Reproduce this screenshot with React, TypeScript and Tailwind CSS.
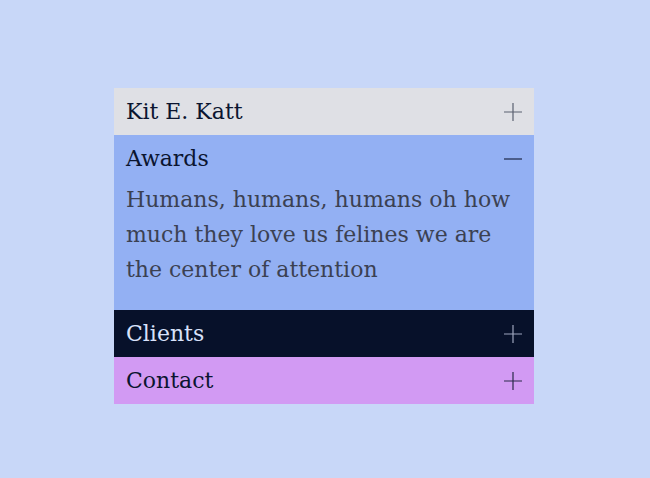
import React from "react";

const Plus = ({ color }: { color: string }) => (
  <svg width="18" height="18" viewBox="0 0 18 18" fill="none">
    <path d="M0 9H18M9 0V18" stroke={color} strokeWidth="1.2" />
  </svg>
);
const Minus = ({ color }: { color: string }) => (
  <svg width="18" height="18" viewBox="0 0 18 18" fill="none">
    <path d="M0 9H18" stroke={color} strokeWidth="1.2" />
  </svg>
);

export default function App() {
  const serif = { fontFamily: '"DejaVu Serif", "Liberation Serif", serif' };
  return (
    <div className="w-[650px] h-[478px] bg-[#c8d7f8] flex pl-[114px] pt-[88px]" style={serif}>
      <div className="w-[420px] flex flex-col">
        <div className="h-[47px] bg-[#dfe0e5] flex items-center justify-between pl-3 pr-3">
          <span className="text-[22px] leading-8 text-[#0b1530]">Kit E. Katt</span>
          <Plus color="#5a6070" />
        </div>
        <div className="bg-[#93b0f3]">
          <div className="h-[47px] flex items-center justify-between pl-3 pr-3">
            <span className="text-[22px] leading-8 text-[#0b1530]">Awards</span>
            <Minus color="#1c2747" />
          </div>
          <p className="px-3 pb-[23px] text-[22px] leading-[35px] text-[#3b4152]">
            Humans, humans, humans oh how
            <br />
            much they love us felines we are
            <br />
            the center of attention
          </p>
        </div>
        <div className="h-[47px] bg-[#07112a] flex items-center justify-between pl-3 pr-3">
          <span className="text-[22px] leading-8 text-[#d8e2fb]">Clients</span>
          <Plus color="#9ea6bd" />
        </div>
        <div className="h-[47px] bg-[#d29af3] flex items-center justify-between pl-3 pr-3">
          <span className="text-[22px] leading-8 text-[#0b1530]">Contact</span>
          <Plus color="#2a2a4a" />
        </div>
      </div>
    </div>
  );
}
